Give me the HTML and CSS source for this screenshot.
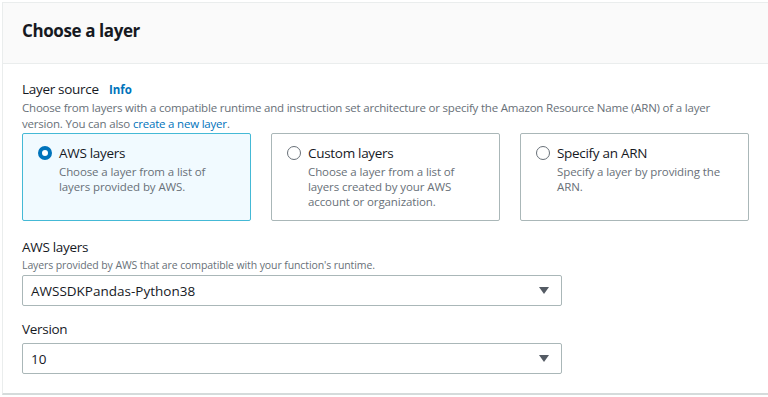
FILE: index.html
```html
<!DOCTYPE html>
<html lang="en">
<head>
    <meta charset="UTF-8">
    <meta name="viewport" content="width=device-width, initial-scale=1.0">
    <title>Choose a layer</title>
    <link rel="stylesheet" href="styles.css">
</head>
<body>

    <div class="panel">
        <div class="panel-header">
            <h2 class="panel-title">Choose a layer</h2>
        </div>

        <div class="panel-body">
            <!-- Layer source -->
            <div class="field source">
                <div class="field-label">Layer source <a class="info-link" href="#">Info</a></div>
                <p class="field-desc">Choose from layers with a compatible runtime and instruction set architecture or specify the Amazon Resource Name (ARN) of a layer version. You can also <a class="link" href="#">create a new layer</a>.</p>

                <div class="tiles">
                    <label class="tile selected">
                        <span class="radio checked"></span>
                        <span class="tile-text">
                            <span class="tile-title">AWS layers</span>
                            <span class="tile-desc">Choose a layer from a list of layers provided by AWS.</span>
                        </span>
                    </label>
                    <label class="tile">
                        <span class="radio"></span>
                        <span class="tile-text">
                            <span class="tile-title">Custom layers</span>
                            <span class="tile-desc">Choose a layer from a list of layers created by your AWS account or organization.</span>
                        </span>
                    </label>
                    <label class="tile">
                        <span class="radio"></span>
                        <span class="tile-text">
                            <span class="tile-title">Specify an ARN</span>
                            <span class="tile-desc">Specify a layer by providing the ARN.</span>
                        </span>
                    </label>
                </div>
            </div>

            <!-- AWS layers -->
            <div class="field">
                <div class="field-label">AWS layers</div>
                <p class="field-desc small">Layers provided by AWS that are compatible with your function's runtime.</p>
                <div class="select">
                    <span class="select-value">AWSSDKPandas-Python38</span>
                    <span class="caret"></span>
                </div>
            </div>

            <!-- Version -->
            <div class="field">
                <div class="field-label spaced">Version</div>
                <div class="select">
                    <span class="select-value">10</span>
                    <span class="caret"></span>
                </div>
            </div>
        </div>
    </div>

</body>
</html>
```

FILE: styles.css
```css
/* Page */
body {
    margin: 0;
    background: #fff;
    font-family: "Open Sans", "Noto Sans", sans-serif;
    color: #16191f;
}

/* Outer panel */
.panel {
    margin: 2px 0 0 2px;
    border: 1px solid #eaeded;
    border-right: none;
    border-bottom: 2px solid #d5dbdb;
    height: 393px;
    box-sizing: border-box;
}

.panel-header {
    background: #fafafa;
    border-bottom: 1px solid #eaeded;
    height: 60px;
    padding: 0 19px;
    display: flex;
    align-items: center;
}

.panel-title {
    margin: 0 0 5px;
    font-size: 17px;
    font-weight: 700;
    letter-spacing: -0.4px;
}

.panel-body {
    padding: 15px 19px 0;
}

/* Form fields */
.field {
    margin-bottom: 13px;
}

.field.source {
    margin-bottom: 16px;
}

.field-label {
    font-size: 13.5px;
    line-height: 20px;
    letter-spacing: -0.3px;
}

.field-label.spaced {
    margin-bottom: 4px;
}

.info-link {
    margin-left: 7px;
    font-size: 11.5px;
    font-weight: 700;
    letter-spacing: 0;
    color: #0073bb;
    text-decoration: none;
}

.field-desc {
    margin: 0;
    font-size: 11.5px;
    line-height: 16px;
    letter-spacing: -0.2px;
    color: #687078;
}

.field-desc.small {
    font-size: 10.5px;
    margin-bottom: 2px;
    letter-spacing: -0.1px;
}

.link {
    color: #0073bb;
    text-decoration: none;
}

/* Radio tiles */
.tiles {
    display: grid;
    grid-template-columns: repeat(3, 229px);
    column-gap: 20px;
    margin-top: 1px;
}

.tile {
    display: flex;
    align-items: flex-start;
    height: 88px;
    box-sizing: border-box;
    padding: 8px 15px;
    border: 1px solid #aab7b8;
    border-radius: 2px;
    background: #fff;
}

.tile.selected {
    border-color: #44b9d6;
    background: #f1faff;
}

.radio {
    width: 14px;
    height: 14px;
    margin: 4px 7px 0 0;
    flex-shrink: 0;
    border: 1.5px solid #687078;
    border-radius: 50%;
    box-sizing: border-box;
    background: #fff;
}

.radio.checked {
    border: 4px solid #0073bb;
}

.tile-text {
    display: flex;
    flex-direction: column;
}

.tile-title {
    font-size: 13.5px;
    line-height: 22px;
    letter-spacing: -0.3px;
}

.tile-desc {
    font-size: 11.5px;
    line-height: 15px;
    letter-spacing: -0.1px;
    color: #687078;
}

/* Select boxes */
.select {
    width: 540px;
    height: 31px;
    box-sizing: border-box;
    border: 1px solid #aab7b8;
    border-radius: 2px;
    padding: 0 12px 0 8px;
    display: flex;
    align-items: center;
    justify-content: space-between;
}

.select-value {
    font-size: 13.5px;
}

.caret {
    width: 0;
    height: 0;
    border-left: 5px solid transparent;
    border-right: 5px solid transparent;
    border-top: 7px solid #545b64;
}
```
